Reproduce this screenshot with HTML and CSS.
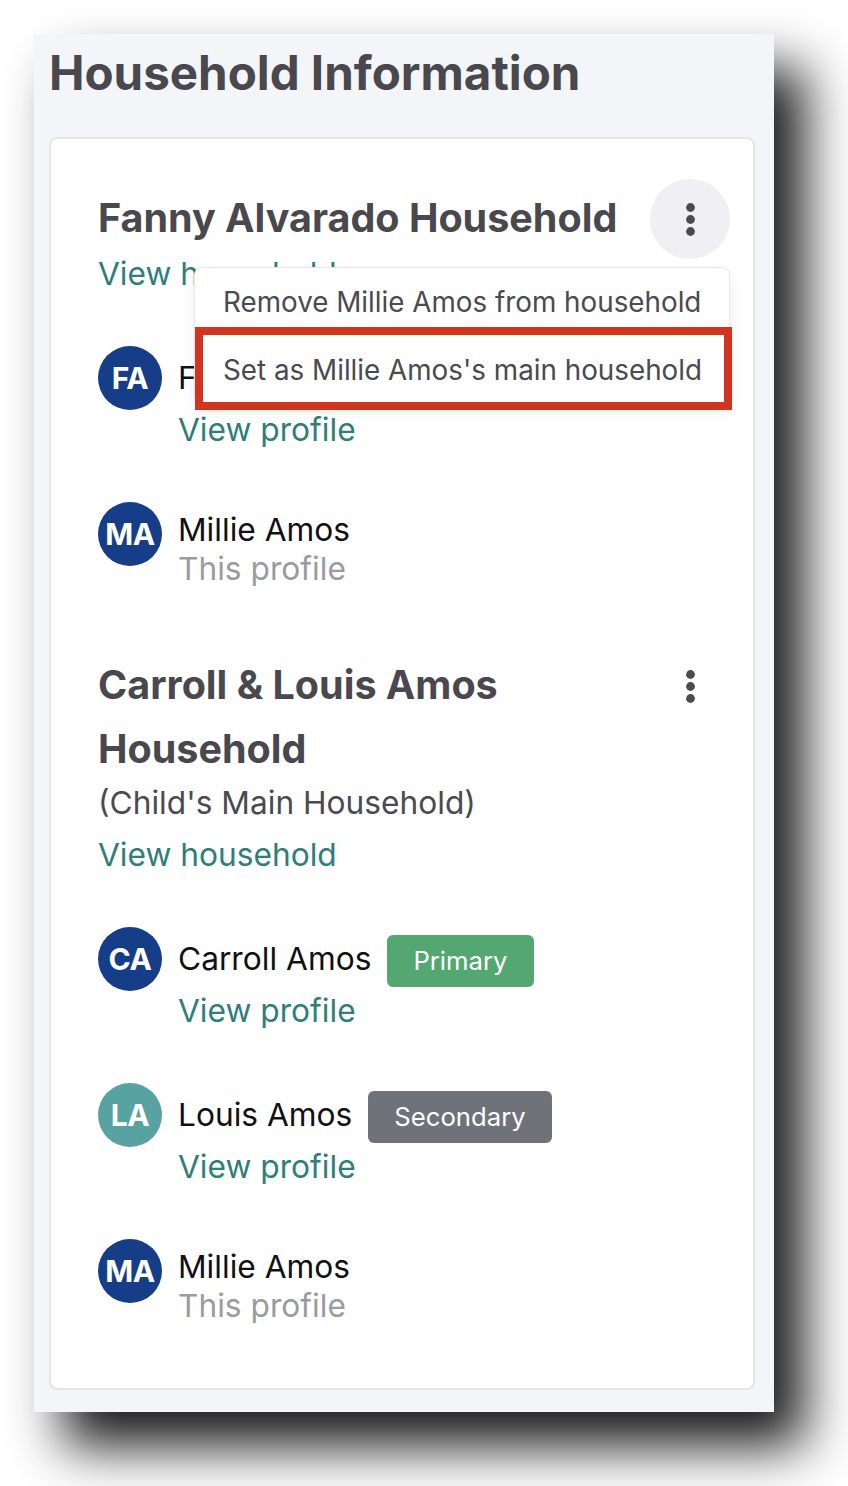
FILE: index.html
```html
<!DOCTYPE html>
<html lang="en">
<head>
<meta charset="utf-8">
<title>Household Information</title>
<link rel="stylesheet" href="styles.css">
</head>
<body>
<div class="window">
  <h1 class="title">Household Information</h1>
  <div class="card">
    <section class="household">
      <div class="household-head">
        <h2 class="household-name">Fanny Alvarado Household</h2>
        <div class="actions">
          <button class="kebab is-open" type="button" aria-label="More actions">
            <svg class="kebab-icon" width="9" height="33" viewBox="0 0 9 33" aria-hidden="true"><circle cx="4.5" cy="4.5" r="4.4"/><circle cx="4.5" cy="16.5" r="4.4"/><circle cx="4.5" cy="28.5" r="4.4"/></svg>
          </button>
          <ul class="menu">
            <li class="menu-item">Remove Millie Amos from household</li>
            <li class="menu-item is-highlighted">Set as Millie Amos's main household</li>
          </ul>
        </div>
      </div>
      <a class="link household-link" href="#">View household</a>
      <ul class="members">
        <li class="member">
          <span class="avatar avatar-navy">FA</span>
          <div class="member-info">
            <div class="name-row"><span class="member-name">Fanny Alvarado</span><span class="badge badge-primary">Primary</span></div>
            <a class="link" href="#">View profile</a>
          </div>
        </li>
        <li class="member">
          <span class="avatar avatar-navy">MA</span>
          <div class="member-info">
            <div class="name-row"><span class="member-name">Millie Amos</span></div>
            <span class="member-note">This profile</span>
          </div>
        </li>
      </ul>
    </section>

    <section class="household">
      <div class="household-head">
        <h2 class="household-name">Carroll &amp; Louis Amos Household</h2>
        <div class="actions">
          <button class="kebab" type="button" aria-label="More actions">
            <svg class="kebab-icon" width="9" height="33" viewBox="0 0 9 33" aria-hidden="true"><circle cx="4.5" cy="4.5" r="4.4"/><circle cx="4.5" cy="16.5" r="4.4"/><circle cx="4.5" cy="28.5" r="4.4"/></svg>
          </button>
        </div>
      </div>
      <p class="subtitle">(Child's Main Household)</p>
      <a class="link household-link" href="#">View household</a>
      <ul class="members">
        <li class="member">
          <span class="avatar avatar-navy">CA</span>
          <div class="member-info">
            <div class="name-row"><span class="member-name">Carroll Amos</span><span class="badge badge-primary">Primary</span></div>
            <a class="link" href="#">View profile</a>
          </div>
        </li>
        <li class="member">
          <span class="avatar avatar-teal">LA</span>
          <div class="member-info">
            <div class="name-row"><span class="member-name">Louis Amos</span><span class="badge badge-secondary">Secondary</span></div>
            <a class="link" href="#">View profile</a>
          </div>
        </li>
        <li class="member">
          <span class="avatar avatar-navy">MA</span>
          <div class="member-info">
            <div class="name-row"><span class="member-name">Millie Amos</span></div>
            <span class="member-note">This profile</span>
          </div>
        </li>
      </ul>
    </section>
  </div>
</div>
</body>
</html>
```

FILE: styles.css
```css
* { box-sizing: border-box; }

html, body {
  margin: 0;
  padding: 0;
  background: #ffffff;
}

body {
  font-family: "Inter", "Noto Sans", sans-serif;
  padding: 34px 0 74px 34px;
}

.window {
  width: 740px;
  background: #f4f5f9;
  padding: 10px 19px 22px 15px;
  box-shadow: 30px 34px 50px rgba(0, 0, 0, 0.9);
}

.title {
  margin: 0 0 35px;
  font-size: 47.5px;
  line-height: 58px;
  font-weight: 700;
  color: #48484e;
}

.card {
  background: #ffffff;
  border: 2px solid #e4e4ea;
  border-radius: 8px;
  padding: 47px 47px 63px;
}

.household + .household { margin-top: 65px; }

.household-head {
  display: flex;
  align-items: flex-start;
  justify-content: space-between;
  gap: 16px;
}

.household-name {
  margin: 0;
  font-size: 39.5px;
  line-height: 64px;
  font-weight: 700;
  color: #48484e;
}

.actions {
  position: relative;
  flex: none;
  margin: -7px -24px -9px 0;
}

.kebab {
  width: 80px;
  height: 80px;
  padding: 0;
  border: 0;
  border-radius: 50%;
  background: transparent;
  display: flex;
  align-items: center;
  justify-content: center;
  color: #4a4a50;
}

.kebab.is-open { background: #efeff4; }

.kebab-icon { display: block; fill: currentColor; }

.menu {
  position: absolute;
  top: 88px;
  right: 0;
  margin: 0;
  padding: 0;
  list-style: none;
  background: #ffffff;
  border: 1px solid #e6e6ec;
  border-radius: 8px;
  box-shadow: 0 6px 16px rgba(20, 20, 40, 0.08);
  white-space: nowrap;
  z-index: 2;
}

.menu-item {
  position: relative;
  padding: 0 27px 0 28px;
  font-size: 27.8px;
  line-height: 68px;
  color: #4a4a50;
}

.menu-item.is-highlighted::after {
  content: "";
  position: absolute;
  inset: -9px -3px -6px 0;
  border: 8px solid #d3341f;
}

.subtitle {
  margin: 2px 0 0;
  font-size: 31.7px;
  line-height: 39px;
  color: #4a4a50;
}

.link {
  display: block;
  font-size: 31.7px;
  line-height: 39px;
  color: #2e7e7b;
  text-decoration: none;
}

.household-link { margin-top: 4px; }
.subtitle + .household-link { margin-top: 13px; }

.members {
  list-style: none;
  margin: 0;
  padding: 0;
}

.member {
  display: flex;
  align-items: flex-start;
  gap: 16px;
  margin-top: 53px;
}

.avatar {
  flex: none;
  width: 64px;
  height: 64px;
  border-radius: 50%;
  display: flex;
  align-items: center;
  justify-content: center;
  color: #ffffff;
  font-size: 30px;
  font-weight: 700;
  letter-spacing: -0.5px;
}

.avatar-navy { background: #163d88; }
.avatar-teal { background: #58a2a1; }

.member-info { padding-top: 8px; }

.name-row {
  display: flex;
  align-items: baseline;
  gap: 16px;
}

.member-name {
  font-size: 31.7px;
  line-height: 39px;
  color: #111114;
}

.badge {
  font-size: 25.7px;
  line-height: 52px;
  padding: 0 26px;
  border-radius: 6px;
  color: #ffffff;
  margin-bottom: 4px;
}

.badge-primary { background: #55a772; }
.badge-secondary { background: #6f7279; }

.member-note {
  display: block;
  font-size: 31.7px;
  line-height: 39px;
  color: #9a9aa1;
}
```
